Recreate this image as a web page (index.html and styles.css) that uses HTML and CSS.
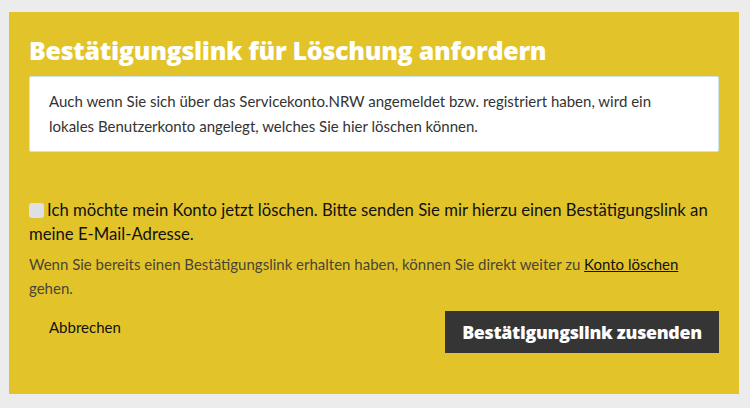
FILE: index.html
```html
<!DOCTYPE html>
<html lang="de">
<head>
<meta charset="utf-8">
<link rel="stylesheet" href="styles.css">
</head>
<body>
<div class="panel">
  <h1 class="title">Bestätigungslink für Löschung anfordern</h1>
  <div class="notice">Auch wenn Sie sich über das Servicekonto.NRW angemeldet bzw. registriert haben, wird ein lokales Benutzerkonto angelegt, welches Sie hier löschen können.</div>
  <label class="confirm"><span class="box"></span>Ich möchte mein Konto jetzt löschen. Bitte senden Sie mir hierzu einen Bestätigungslink an meine E-Mail-Adresse.</label>
  <p class="hint">Wenn Sie bereits einen Bestätigungslink erhalten haben, können Sie direkt weiter zu <a href="#" class="link">Konto löschen</a> gehen.</p>
  <div class="actions">
    <a href="#" class="cancel">Abbrechen</a>
    <button class="submit">Bestätigungslink zusenden</button>
  </div>
</div>
</body>
</html>
```
FILE: styles.css
```css
html, body { margin: 0; padding: 0; }
body {
  background: #ececec;
  font-family: "Lato", "Open Sans", sans-serif;
  padding: 12px 11px 14px 9px;
}
.panel {
  background: #e2c42a;
  padding: 22px 20px 41px 20px;
  height: 382px;
  box-sizing: border-box;
}
.title {
  margin: 0;
  font-family: "Open Sans", sans-serif;
  font-weight: 800;
  font-size: 25px;
  line-height: 32px;
  letter-spacing: -0.3px;
  color: #fff;
}
.notice {
  margin-top: 10px;
  background: #fff;
  border: 1px solid #cfe3ea;
  border-radius: 2px;
  padding: 12px 19px 12px 19px;
  font-size: 15px;
  line-height: 25px;
  color: #333;
}
.confirm {
  display: block;
  margin-top: 46px;
  font-size: 16.7px;
  line-height: 24px;
  color: #111;
}
.box {
  display: inline-block;
  width: 15px;
  height: 15px;
  background: #dde0e6;
  border-radius: 3px;
  vertical-align: -2px;
  margin-right: 3px;
}
.hint {
  margin: 6px 0 0 0;
  font-size: 15px;
  line-height: 24px;
  color: #4a4434;
}
.link { color: #111; text-decoration: underline; }
.actions {
  margin-top: 11px;
  display: flex;
  justify-content: space-between;
  align-items: flex-start;
}
.cancel {
  margin: 7px 0 0 20px;
  font-size: 15px;
  color: #111;
  text-decoration: none;
}
.submit {
  background: #353535;
  color: #fff;
  border: 0;
  border-radius: 0;
  width: 274px;
  height: 42px;
  padding: 0;
  font-family: "Open Sans", sans-serif;
  font-weight: 800;
  font-size: 17.8px;
  letter-spacing: -0.3px;
}
```
